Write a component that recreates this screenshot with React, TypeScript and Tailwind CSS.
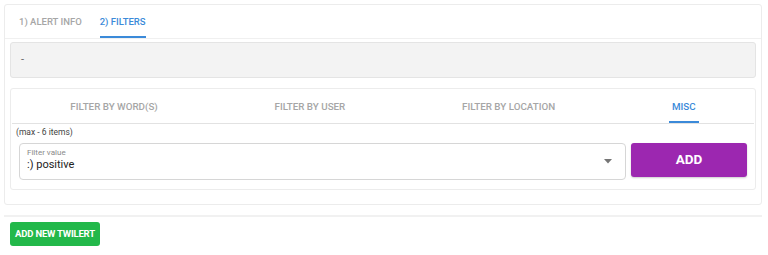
import React, {useState} from 'react';

const innerTabs = ['FILTER BY WORD(S)', 'FILTER BY USER', 'FILTER BY LOCATION', 'MISC'];

export default function App() {
  const [step, setStep] = useState(1);
  const [tab, setTab] = useState(3);

  return (
    <div className="w-[768px] h-[255px] bg-white font-['Roboto',sans-serif] overflow-hidden">
      <div className="mx-[4px] mt-[4px] w-[758px] h-[201px] border border-[#ececec] rounded-[3px] flex flex-col">
        {/* step tabs */}
        <div className="flex h-[34px] border-b border-[#f0f0f0] pl-[14px] gap-[18px]">
          {['1) ALERT INFO', '2) FILTERS'].map((label, i) => (
            <button
              key={label}
              onClick={() => setStep(i)}
              className={
                'relative h-full pt-[1px] text-[9.5px] font-medium leading-[12px] ' +
                (step === i ? 'text-[#3b8ad9]' : 'text-[#a6a6a6]')
              }
            >
              {label}
              {step === i && <span className="absolute left-0 right-0 bottom-[0px] h-[2px] bg-[#3b8ad9]"/>}
            </button>
          ))}
        </div>

        <div className="mx-[5px] mt-[3px] h-[36px] bg-[#f3f3f3] border border-[#e4e4e4] rounded-[3px] flex items-center pl-[10px] text-[11px] text-[#666]">
          -
        </div>

        <div className="mx-[5px] mt-[10px] h-[102px] border border-[#ececec] rounded-[3px] flex flex-col">
          <div className="flex justify-around h-[35px] border-b border-[#e2e2e2] mx-[1px]">
            {innerTabs.map((label, i) => (
              <button
                key={label}
                onClick={() => setTab(i)}
                className={
                  'relative h-full pt-[1px] text-[9.8px] font-medium leading-[13px] ' +
                  (tab === i ? 'text-[#3b8ad9]' : 'text-[#a6a6a6]')
                }
              >
                {label}
                {tab === i && <span className="absolute -left-[3px] -right-[3px] bottom-[0px] h-[2px] bg-[#3b8ad9]"/>}
              </button>
            ))}
          </div>
          <div className="pl-[5px] pt-[2px] text-[8.5px] leading-[12px] text-[#444]">(max - 6 items)</div>
          <div className="flex items-start pl-[8px] pt-[5px] gap-[5px]">
            <div className="relative w-[607px] h-[37px] border border-[#d6d6d6] rounded-[4px] pl-[7px] pt-[4px]">
              <div className="text-[8px] leading-[10px] text-[#8a8a8a]">Filter value</div>
              <div className="text-[11px] leading-[13px] text-[#222]">:) positive</div>
              <svg className="absolute right-[13px] top-[15px]" width="8" height="5" viewBox="0 0 8 5">
                <path d="M0 0h8L4 4.5z" fill="#757575"/>
              </svg>
            </div>
            <button className="w-[116px] h-[34px] pb-[1px] rounded-[3px] bg-[#9c27b0] text-white text-[13.5px] font-bold shadow-[0_1px_2px_rgba(0,0,0,0.2)]">
              ADD
            </button>
          </div>
        </div>
      </div>

      <div className="mx-[4px] mt-[10px] w-[758px] h-[2px] bg-[#f1f1f1]"/>

      <button className="ml-[10px] mt-[5px] w-[90px] h-[24px] rounded-[3px] bg-[#22b84a] text-white text-[9.5px] font-bold tracking-[-0.2px]">
        ADD NEW TWILERT
      </button>
    </div>
  );
}
